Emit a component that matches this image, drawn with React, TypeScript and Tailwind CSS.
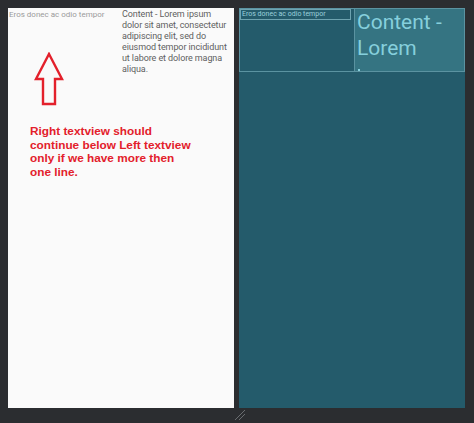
import React from 'react';

const bodyLines = [
  'Content - Lorem ipsum',
  'dolor sit amet, consectetur',
  'adipiscing elit, sed do',
  'eiusmod tempor incididunt',
  'ut labore et dolore magna',
  'aliqua.',
];

const UpArrow: React.FC = () => (
  <svg width="30" height="54" viewBox="0 0 30 54" className="block">
    <path
      d="M15 2 L28 27 L21 27 L21 52 L9 52 L9 27 L2 27 Z"
      fill="none"
      stroke="#e3202b"
      strokeWidth="2.4"
      strokeLinejoin="miter"
    />
  </svg>
);

const DesignPreview: React.FC = () => (
  <div className="w-[226px] h-[400px] bg-[#fafafa] flex flex-col">
    <div className="flex pt-[1px]">
      <div className="w-[114px] pl-[1px] text-[8px] leading-[11px] text-[#9a9a9a] font-['Roboto',sans-serif] whitespace-nowrap">
        Eros donec ac odio tempor
      </div>
      <div className="text-[9px] leading-[11px] tracking-[-0.1px] text-[#5f5f5f] font-['Roboto',sans-serif] whitespace-nowrap">
        {bodyLines.map((l) => (
          <div key={l}>{l}</div>
        ))}
      </div>
    </div>
    <div className="pl-[26px] -mt-[23px]">
      <UpArrow />
    </div>
    <p className="pl-[22px] mt-[19px] text-[11.8px] leading-[13.7px] font-bold text-[#e3202b] font-['Liberation_Sans',Arial,sans-serif]">
      Right textview should
      <br />
      continue below Left textview
      <br />
      only if we have more then
      <br />
      one line.
    </p>
  </div>
);

const BlueprintPreview: React.FC = () => (
  <div className="w-[226px] h-[400px] bg-[#245b6b]">
    <div className="flex h-[64px] border border-[#5b93a1]">
      <div className="w-[115px] border-r border-[#5b93a1]">
        <div className="w-[111px] h-[11px] border border-[#6ea3b0] px-[1px] text-[7px] leading-[9px] text-[#9bd0dc] font-['Roboto',sans-serif] truncate">
          Eros donec ac odio tempor
        </div>
      </div>
      <div className="flex-1 bg-[#357482] pl-[2px] overflow-hidden relative">
        <div className="text-[21px] leading-[26px] text-[#86cfdc] font-['Roboto',sans-serif]">
          Content -<br />
          Lorem
        </div>
        {/* clipped third line of the large label */}
        <span className="absolute left-[3px] bottom-[0px] w-[2px] h-[2px] bg-[#86cfdc]" />
      </div>
    </div>
  </div>
);

export default function App() {
  return (
    <div className="w-[474px] h-[423px] bg-[#2b2d30] relative">
      <div className="flex gap-[5px] pl-[8px] pt-[8px]">
        <DesignPreview />
        <BlueprintPreview />
      </div>
      {/* resize grip */}
      <svg width="12" height="12" viewBox="0 0 12 12" className="absolute left-[234px] top-[409px]">
        <path d="M1 11 L11 1 M5 11 L11 5" stroke="#6a6d70" strokeWidth="1" />
      </svg>
    </div>
  );
}
